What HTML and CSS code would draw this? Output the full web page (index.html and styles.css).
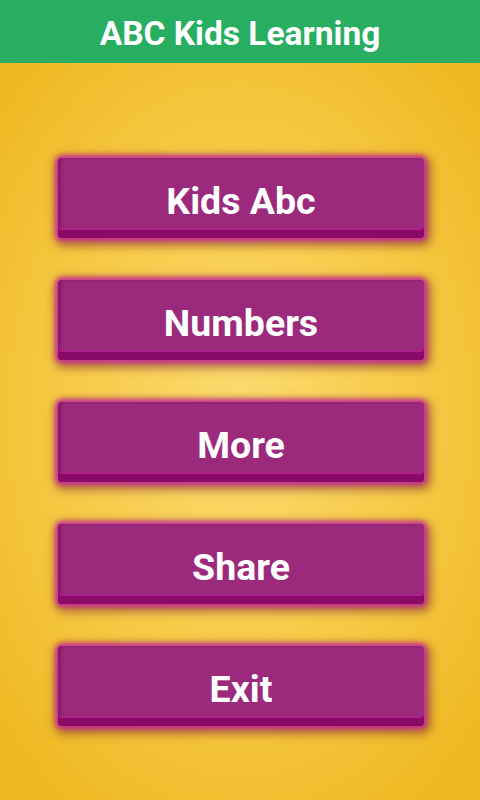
FILE: index.html
```html
<!DOCTYPE html>
<html lang="en">
<head>
    <meta charset="UTF-8">
    <meta name="viewport" content="width=device-width, initial-scale=1.0">
    <title>ABC Kids Learning</title>
    <link rel="stylesheet" href="styles.css">
</head>
<body>
    <div class="header">
        <h1>ABC Kids Learning</h1>
    </div>
    <div class="menu">
        <button class="menu-button">Kids Abc</button>
        <button class="menu-button">Numbers</button>
        <button class="menu-button">More</button>
        <button class="menu-button">Share</button>
        <button class="menu-button">Exit</button>
    </div>
</body>
</html>
```

FILE: styles.css
```css
html, body {
    height: 100%;
}
body {
    font-family: Roboto, "Noto Sans", sans-serif;
    margin: 0;
    padding: 0;
    display: flex;
    flex-direction: column;
    background: radial-gradient(ellipse 70% 60% at 50% 52%, #fcdb70 0%, #f6c944 55%, #eeb71f 100%);
}
.header {
    background-color: #27ae60;
    height: 63px;
    display: flex;
    align-items: center;
    justify-content: center;
}
.header h1 {
    margin: 0;
    padding-top: 3px;
    color: #fff;
    font-size: 33.5px;
    font-weight: bold;
}
.menu {
    display: flex;
    flex-direction: column;
    align-items: center;
    gap: 42px;
    padding-top: 95px;
}
.menu-button {
    width: 366px;
    height: 80px;
    margin-left: 2px;
    font-family: Roboto, "Noto Sans", sans-serif;
    font-size: 37.5px;
    font-weight: bold;
    color: #fff;
    background-color: #9c2a7c;
    border: none;
    border-radius: 4px;
    padding: 5px 0 0;
    cursor: pointer;
    box-shadow:
        inset 0 -8px 0 #8a0a68,
        inset 0 -9px 1px #c2189a,
        inset 3px 0 3px rgba(110, 10, 80, 0.5),
        0 0 4px 3px rgba(210, 30, 170, 0.75),
        2px 3px 10px 5px rgba(120, 35, 55, 0.55);
}
```
